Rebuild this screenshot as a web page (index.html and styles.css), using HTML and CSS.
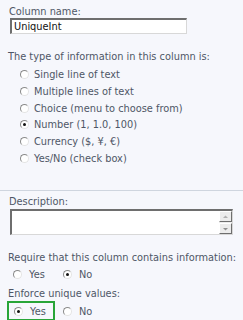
FILE: index.html
```html
<!DOCTYPE html>
<html>
<head>
<meta charset="utf-8">
<link rel="stylesheet" href="styles.css">
</head>
<body>
<div class="page">
  <div class="sec top">
    <div class="label l-colname">Column name:</div>
    <div class="input">UniqueInt</div>
    <div class="label l-type">The type of information in this column is:</div>
    <div class="options">
      <div class="opt"><span class="radio"></span><span>Single line of text</span></div>
      <div class="opt"><span class="radio"></span><span>Multiple lines of text</span></div>
      <div class="opt"><span class="radio"></span><span>Choice (menu to choose from)</span></div>
      <div class="opt"><span class="radio on"></span><span>Number (1, 1.0, 100)</span></div>
      <div class="opt"><span class="radio"></span><span>Currency ($, ¥, €)</span></div>
      <div class="opt"><span class="radio"></span><span>Yes/No (check box)</span></div>
    </div>
  </div>
  <div class="sep"></div>
  <div class="sec bottom">
    <div class="label l-desc">Description:</div>
    <div class="textarea">
      <div class="ta-body"></div>
      <div class="sb">
        <div class="sbtn"><svg width="9" height="6" viewBox="0 0 9 6"><path d="M2 4h5L4.5 1.5z" fill="#b0b0b0"/></svg></div>
        <div class="sbtn"><svg width="9" height="6" viewBox="0 0 9 6"><path d="M2 2h5L4.5 4.5z" fill="#909090"/></svg></div>
      </div>
    </div>
    <div class="label l-req">Require that this column contains information:</div>
    <div class="yn r1">
      <div class="opt yes"><span class="radio"></span><span>Yes</span></div>
      <div class="opt"><span class="radio on"></span><span>No</span></div>
    </div>
    <div class="label l-uniq">Enforce unique values:</div>
    <div class="yn r2">
      <div class="opt hl"><span class="radio on"></span><span>Yes</span></div>
      <div class="opt"><span class="radio"></span><span>No</span></div>
    </div>
  </div>
</div>
</body>
</html>
```
FILE: styles.css
```css
html, body {
  margin: 0;
  padding: 0;
  background: #f6f7fc;
}
body {
  width: 243px;
  height: 320px;
  overflow: hidden;
  font-family: "DejaVu Sans", Verdana, sans-serif;
  font-size: 9.8px;
  color: #4e5666;
}
.label {
  height: 13px;
  line-height: 13px;
  white-space: nowrap;
}
.sec.top {
  padding: 5px 0 0 8px;
}
.l-colname {
  padding-left: 1px;
}
.input {
  margin: 0 0 0 2px;
  width: 170px;
  height: 13px;
  line-height: 13px;
  padding: 0 2px;
  background: #fff;
  border-top: 2px solid #6e6e6e;
  border-left: 2px solid #6e6e6e;
  border-right: 1px solid #d8d8d8;
  border-bottom: 1px solid #d8d8d8;
  color: #111;
  box-sizing: content-box;
}
.l-type {
  margin-top: 15.5px;
}
.options {
  margin-top: 3.6px;
  padding-left: 12px;
}
.opt {
  display: flex;
  align-items: center;
  height: 16.8px;
  white-space: nowrap;
}
.radio {
  width: 7px;
  height: 7px;
  border-radius: 50%;
  border: 1px solid;
  border-color: #8a8a8a #e4e4e4 #e4e4e4 #8a8a8a;
  background: #fff;
  margin-right: 5px;
  position: relative;
  flex: none;
}
.radio.on::after {
  content: "";
  position: absolute;
  left: 2px;
  top: 2px;
  width: 3px;
  height: 3px;
  border-radius: 50%;
  background: #111;
}
.sep {
  margin-top: 23.6px;
  height: 1px;
  background: #cfd5df;
}
.sec.bottom {
  padding: 4px 0 0 8px;
}
.l-desc {
  padding-left: 1px;
}
.textarea {
  margin: 1px 0 0 2px;
  width: 223px;
  height: 26px;
  display: flex;
  box-sizing: border-box;
  border-top: 2px solid #6e6e6e;
  border-left: 2px solid #6e6e6e;
  border-right: 1px solid #d8d8d8;
  border-bottom: 1px solid #d8d8d8;
  background: #fff;
}
.ta-body {
  flex: 1;
}
.sb {
  width: 13px;
  display: flex;
  flex-direction: column;
  gap: 1px;
  background: #ececec;
}
.sbtn {
  flex: 1;
  display: flex;
  align-items: center;
  justify-content: center;
  background: #ececec;
  border: 1px solid;
  border-color: #fff #6e6e6e #6e6e6e #fff;
}
.l-req {
  margin-top: 15.5px;
}
.yn {
  display: flex;
  padding-left: 5px;
}
.yn .radio {
  margin-right: 7px;
}
.r1 {
  margin-top: 2px;
}
.r1 .opt.yes {
  width: 50px;
}
.l-uniq {
  margin-top: 4px;
}
.r2 {
  margin-top: 1.5px;
}
.r2 .opt {
  height: 20px;
}
.r2 .opt.hl {
  box-sizing: border-box;
  width: 48px;
  margin-left: -6px;
  margin-right: 8px;
  padding-left: 5px;
  border: 2px solid #28a538;
}
```
